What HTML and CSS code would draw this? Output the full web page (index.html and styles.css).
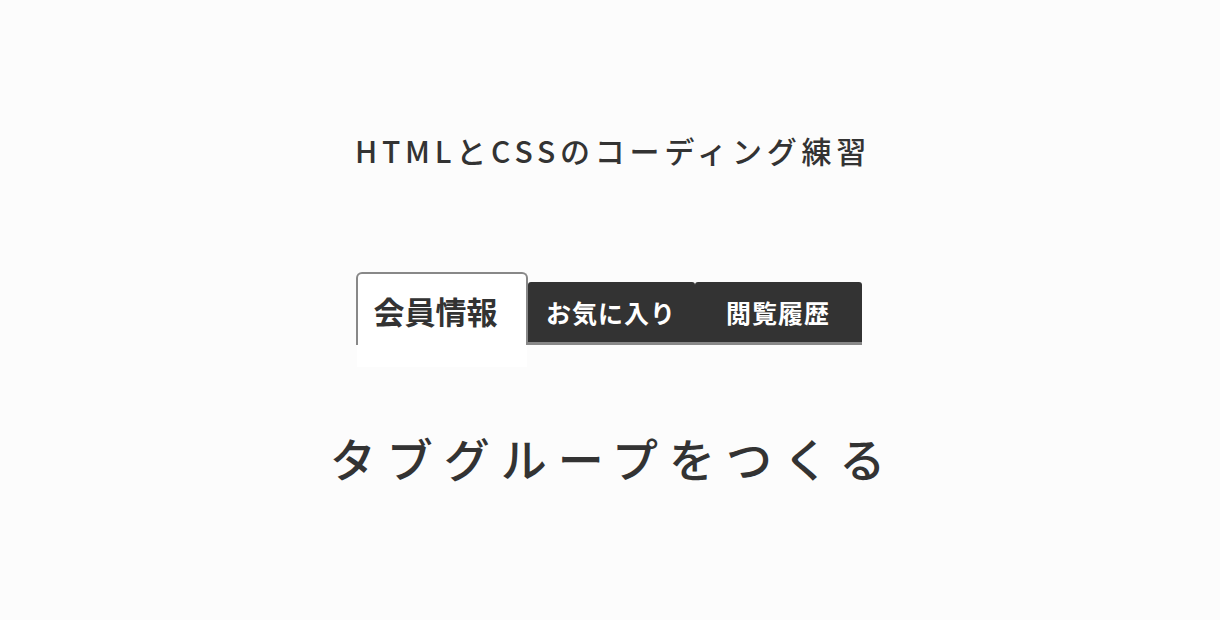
FILE: index.html
```html
<!DOCTYPE html>
<html lang="ja">
<head>
<meta charset="utf-8">
<title>タブグループ</title>
<link rel="stylesheet" href="styles.css">
</head>
<body>
<main class="page">
  <p class="site-title">HTMLとCSSのコーディング練習</p>
  <div class="tabs">
    <div class="tab-list">
      <div class="tab tab-active">会員情報</div>
      <div class="tab tab-dark">お気に入り</div>
      <div class="tab tab-dark">閲覧履歴</div>
    </div>
    <div class="tab-panel"></div>
  </div>
  <h1 class="heading">タブグループをつくる</h1>
</main>
</body>
</html>
```
FILE: styles.css
```css
html, body {
  margin: 0;
  padding: 0;
}
body {
  background: #fcfcfc;
  color: #333;
  font-family: "Noto Sans CJK JP", "Noto Sans", sans-serif;
  width: 1220px;
  height: 620px;
  overflow: hidden;
}
.page {
  display: flex;
  flex-direction: column;
  align-items: center;
  padding-top: 128px;
}
.site-title {
  margin: 0 0 0 6px;
  font-size: 30px;
  line-height: 44px;
  font-weight: 500;
  letter-spacing: 4.8px;
  color: #333;
}
.tabs {
  margin-top: 100px;
  width: 508px;
  margin-left: -1px;
}
.tab-list {
  display: flex;
  align-items: flex-end;
}
.tab {
  box-sizing: border-box;
  display: flex;
  align-items: center;
  justify-content: center;
  font-weight: 700;
}
.tab-active {
  width: 172px;
  height: 73px;
  background: #fff;
  border: 2px solid #888;
  border-bottom: none;
  border-radius: 6px 6px 0 0;
  font-size: 31px;
  color: #333;
  padding-top: 2px;
  justify-content: flex-start;
  padding-left: 16px;
}
.tab-dark {
  width: 167px;
  height: 63px;
  background: #333;
  color: #fff;
  border-bottom: 3px solid #888;
  border-radius: 3px 3px 0 0;
  font-size: 25px;
  letter-spacing: 1px;
}
.tab-panel {
  width: 170px;
  height: 22px;
  margin-left: 1px;
  background: #fff;
}
.heading {
  margin: 60px 0 0 6px;
  font-size: 46px;
  line-height: 60px;
  font-weight: 500;
  letter-spacing: 11px;
  color: #333;
}
```
